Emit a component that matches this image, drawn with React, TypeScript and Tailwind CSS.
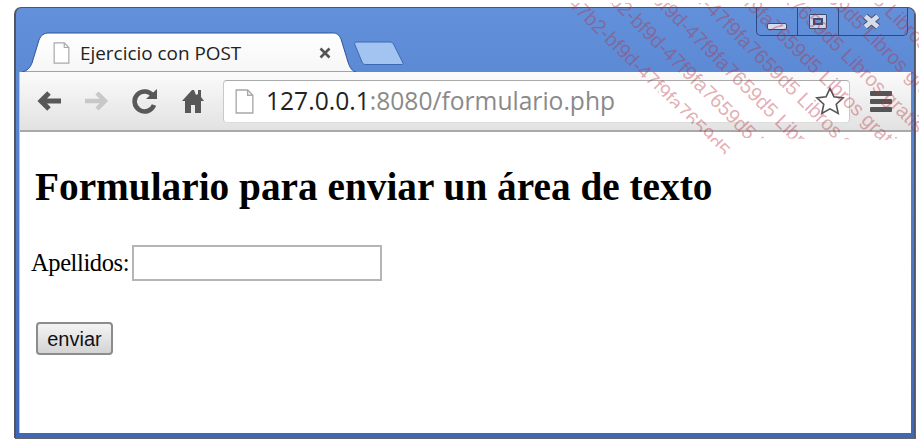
const serif = 'font-["Liberation_Serif",serif]';

const watermarkLines = [
  { pos: 'left-[579px] top-[-8px]', text: '47b2-bf9d-47f9fa7659d5' },
  { pos: 'left-[605px] top-[-26px]', text: '47b2-bf9d-47f9fa7659d5 Libros gratis' },
  { pos: 'left-[627px] top-[-48px]', text: '47b2-bf9d-47f9fa7659d5 Libros gratis' },
  { pos: 'left-[649px] top-[-70px]', text: '47b2-bf9d-47f9fa7659d5 Libros gratis' },
  { pos: 'left-[671px] top-[-92px]', text: '47b2-bf9d-47f9fa7659d5 Libros gratis' },
  { pos: 'left-[693px] top-[-114px]', text: '47b2-bf9d-47f9fa7659d5 Libros gratis' },
  { pos: 'left-[715px] top-[-136px]', text: '47b2-bf9d-47f9fa7659d5 Libros gratis' },
  { pos: 'left-[737px] top-[-158px]', text: '47b2-bf9d-47f9fa7659d5 Libros gratis' },
];

function PageIcon({ className }: { className: string }) {
  return (
    <svg viewBox="0 0 20 24" className={className} fill="#fff" stroke="#a8a8a8" strokeWidth="1.3">
      <path d="M2 1h11l5 5v17H2z" />
      <path d="M13 1v5h5" fill="none" />
    </svg>
  );
}

function Watermark() {
  return (
    <div className="absolute inset-0 overflow-hidden pointer-events-none [clip-path:polygon(570px_3px,919px_3px,919px_155px,900px_140px,740px_138px,725px_155px,570px_10px)]">
      {watermarkLines.map((line) => (
        <span
          key={line.pos}
          className={`absolute ${line.pos} origin-top-left rotate-45 whitespace-nowrap font-["Liberation_Sans",sans-serif] text-[20px] leading-none text-[#b5303f]/40`}
        >
          {line.text}
        </span>
      ))}
    </div>
  );
}

function WindowControls() {
  return (
    <div className="flex h-[28px] rounded-b-[5px] border border-t-0 border-[#2c4a80]">
      <div className="flex w-[41px] items-end justify-center border-r border-[#2c4a80] pb-[5px]">
        <div className="h-[7px] w-[20px] rounded-[2px] border border-[#3c4c6c] bg-[#d5def0]" />
      </div>
      <div className="flex w-[41px] items-center justify-center border-r border-[#2c4a80]">
        <div className="flex h-[15px] w-[18px] items-center justify-center rounded-[1px] border border-[#3c4c6c] bg-[#c8d5ee]">
          <div className="h-[7px] w-[10px] border-2 border-[#3c4c6c] bg-[#6f8fd0]" />
        </div>
      </div>
      <div className="flex w-[68px] items-center justify-center pr-[3px]">
        <svg viewBox="0 0 20 16" className="h-[17px] w-[21px]">
          <path d="M4 3l12 10M16 3L4 13" stroke="#46556f" strokeWidth="6.500" />
          <path d="M4 3l12 10M16 3L4 13" stroke="#d5dcea" strokeWidth="4.500" />
        </svg>
      </div>
    </div>
  );
}

function Tab() {
  return (
    <div className="relative flex h-[40px] w-[334px] items-center pl-[30px] pr-[25px] pt-[2px]">
      <svg viewBox="0 0 334 40" className="absolute inset-0 h-full w-full" preserveAspectRatio="none">
        <defs>
          <linearGradient id="tabFill" x1="0" y1="0" x2="0" y2="1">
            <stop offset="0" stopColor="#ffffff" />
            <stop offset="1" stopColor="#f6f6f6" />
          </linearGradient>
        </defs>
        <path
          d="M0 40C5 39 8 36 10 31L17 8C19 3 22 1 27 1H311C315 1 317 3 319 7L326 30C328 36 330 39 334 40Z"
          fill="url(#tabFill)"
          stroke="#2f5597"
          strokeWidth="1"
        />
      </svg>
      <PageIcon className="relative h-[22px] w-[19px]" />
      <span className='relative ml-[9px] font-["Open_Sans",sans-serif] text-[18.9px] leading-none text-[#222]'>Ejercicio con POST</span>
      <svg viewBox="0 0 12 12" className="relative ml-auto h-[12px] w-[12px]">
        <path d="M1.500 1.500l9 9M10.500 1.500l-9 9" stroke="#555" strokeWidth="2.600" />
      </svg>
    </div>
  );
}

function Toolbar() {
  return (
    <div className="flex h-[60px] items-center border-b-2 border-[#a9a9a9] bg-gradient-to-b from-[#fbfbfb] to-[#e2e2e2] pl-[16px] pr-[19px]">
      <svg viewBox="0 0 26 22" className="h-[22px] w-[26px]">
        <path d="M25 11H6M13 3l-8 8 8 8" fill="none" stroke="#585858" strokeWidth="5" />
      </svg>
      <svg viewBox="0 0 26 22" className="ml-[22px] h-[22px] w-[26px]">
        <path d="M1 11h19M13 3l8 8-8 8" fill="none" stroke="#c8c8c8" strokeWidth="4.500" />
      </svg>
      <svg viewBox="0 0 26 26" className="ml-[22px] h-[26px] w-[26px]">
        <path d="M21 8a10 10 0 1 0 1 9" fill="none" stroke="#585858" strokeWidth="4.600" />
        <path d="M14 11h11V1z" fill="#585858" />
      </svg>
      <svg viewBox="0 0 24 24" className="ml-[23px] h-[24px] w-[24px]">
        <path d="M11 1L1 12h3v12h6v-8h4v8h6V12h3l-3-4V1h-3v4l-2 1-2-5z" fill="#585858" />
      </svg>
      <div className="ml-[18px] flex h-[43px] w-[627px] items-center rounded-[4px] border border-[#c9c9c9] border-t-[#aaa] border-b-[#ddd] bg-white pl-[10px] pr-[4px]">
        <PageIcon className="h-[25px] w-[21px]" />
        <span className='ml-[11px] font-["Open_Sans",sans-serif] text-[24.6px] leading-none text-[#222]'>
          127.0.0.1<span className="text-[#8a8a8a]">:8080/formulario.php</span>
        </span>
        <svg viewBox="0 0 26 26" className="ml-auto h-[30px] w-[30px]">
          <path d="M13 2l3.400 7.400 8 .9-6 5.500 1.700 8L13 19.800 5.900 23.800l1.700-8-6-5.500 8-.9z" fill="#fff" stroke="#555" strokeWidth="1.400" />
        </svg>
      </div>
      <div className="ml-auto flex w-[22px] flex-col gap-[3px]">
        <div className="h-[5px] rounded-[1px] bg-[#555]" />
        <div className="h-[5px] rounded-[1px] bg-[#555]" />
        <div className="h-[5px] rounded-[1px] bg-[#555]" />
      </div>
    </div>
  );
}

export default function App() {
  return (
    <div className="relative h-[443px] w-[919px] overflow-hidden bg-white pl-[14px] pt-[7px]">
      <div className="flex h-[431px] w-[901px] flex-col rounded-t-[7px] border-l-2 border-r border-t border-[#4d5566] bg-gradient-to-b from-[#6290da] to-[#3e67b8] shadow-[1px_1px_0_#666]">
        <div className="flex h-[64px] items-end pl-[6px] pr-[6px]">
          <Tab />
          <svg viewBox="0 0 50 24" className="mb-[7px] ml-[-2px] h-[24px] w-[50px]">
            <path d="M1 4C0 2 1 1 3 1H36C38 1 39 2 40 4L49 22C49.500 23 49 23.500 47 23.500H12C10 23.500 9 23 8 21Z" fill="#a3c4f1" stroke="#3f68b4" strokeWidth="1" />
          </svg>
          <div className="ml-auto self-start"><WindowControls /></div>
        </div>
        <div className="mx-[3px] mb-[5px] flex flex-1 flex-col border-l border-[#c6c6c6] bg-white">
          <Toolbar />
          <div className={`flex-1 bg-white pl-[11px] text-black ${serif}`}>
            <h1 className="ml-[4px] mt-[33px] text-[39.3px] font-bold leading-[44px]">Formulario para enviar un área de texto</h1>
            <div className="mt-[36px] flex items-center">
              <label className="text-[24.5px] leading-none tracking-[-0.4px]">Apellidos:</label>
              <input type="text" className="ml-[3px] h-[36px] w-[250px] border-2 border-[#b5b5b5] bg-white" />
            </div>
            <button className='ml-[5px] mt-[41px] h-[33px] w-[77px] rounded-[4px] border-2 border-[#8c8c8c] bg-gradient-to-b from-[#f4f4f4] to-[#d4d4d4] font-["Liberation_Sans",sans-serif] text-[20px] leading-none text-[#111]'>enviar</button>
          </div>
        </div>
      </div>
      <Watermark />
    </div>
  );
}
